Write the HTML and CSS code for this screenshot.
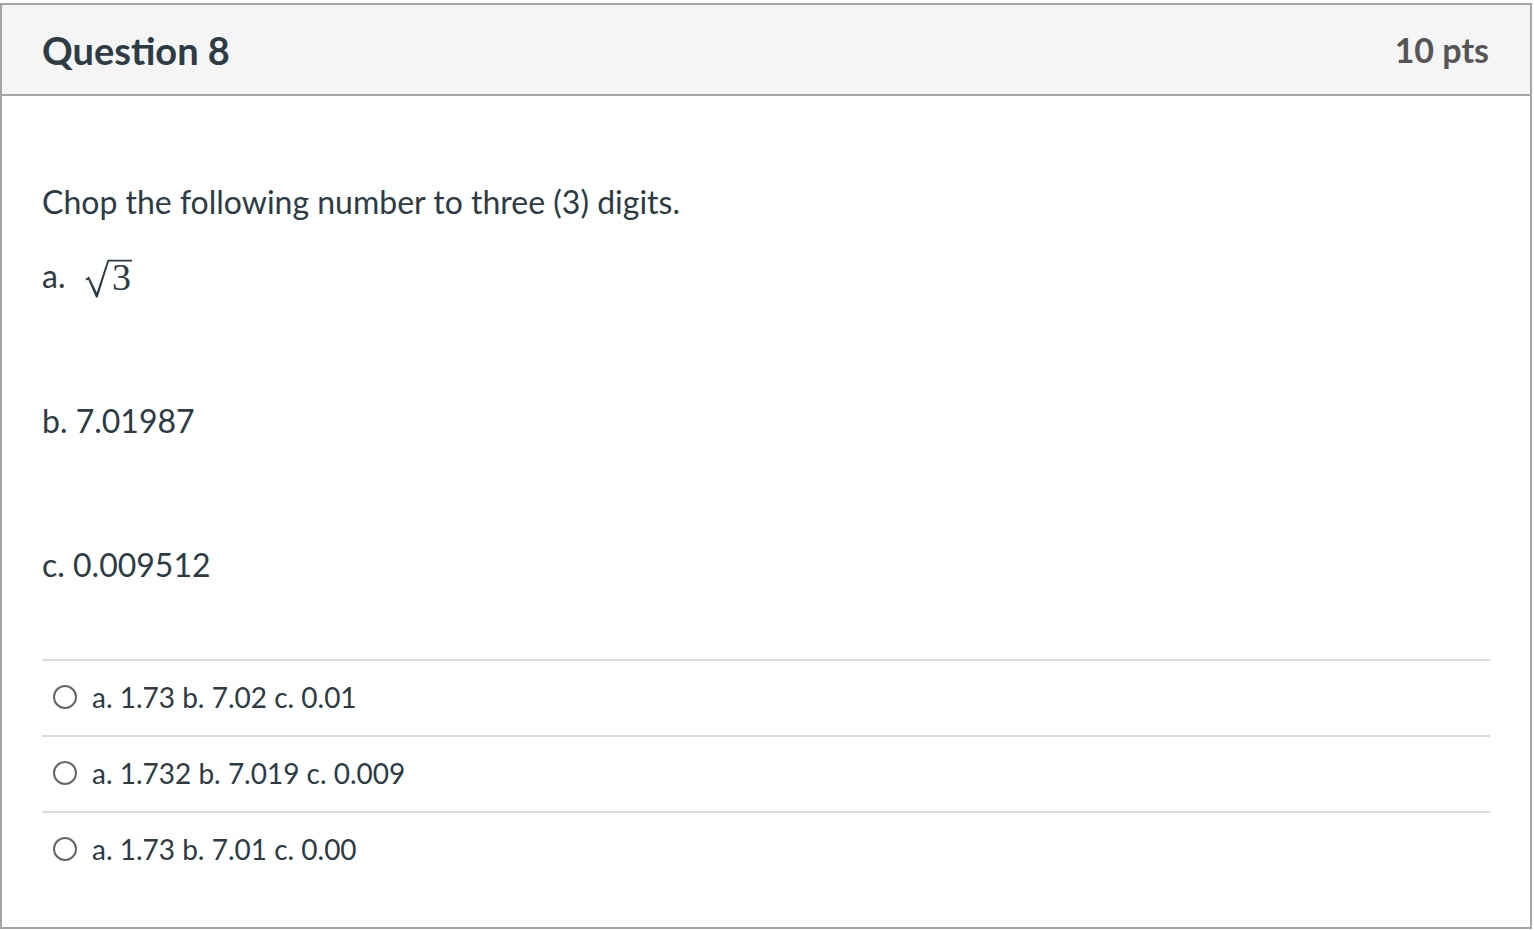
FILE: index.html
```html
<!DOCTYPE html>
<html>
<head>
<meta charset="utf-8">
<link rel="stylesheet" href="styles.css">
</head>
<body>
<div class="question">
  <div class="q-header">
    <h2 class="q-title">Question 8</h2>
    <div class="q-points">10 pts</div>
  </div>
  <div class="q-body">
    <p class="q-text first">Chop the following number to three (3) digits.</p>
    <p class="q-text item-a">a. <svg class="sqrt" width="48" height="42" viewBox="0 -2 48 42"><path d="M0.5 20 L4 17.5 L11.8 33.5 L22.6 0.8 L47 0.8 L47 2.6 L23.9 2.6 L12.6 38.5 L11 38.5 L3.2 20.6 L1.3 21.6 Z" fill="#2d3b45"/><text x="27" y="31" class="radicand">3</text></svg></p>
    <p class="q-text item">b. 7.01987</p>
    <p class="q-text item">c. 0.009512</p>
    <div class="answers">
      <label class="answer"><span class="radio"></span><span class="answer-text">a. 1.73 b. 7.02 c. 0.01</span></label>
      <label class="answer"><span class="radio"></span><span class="answer-text">a. 1.732 b. 7.019 c. 0.009</span></label>
      <label class="answer"><span class="radio"></span><span class="answer-text">a. 1.73 b. 7.01 c. 0.00</span></label>
    </div>
  </div>
</div>
</body>
</html>
```
FILE: styles.css
```css
html, body {
  margin: 0;
  padding: 0;
  background: #fff;
}
body {
  padding-top: 3px;
  font-family: Lato, "Noto Sans", sans-serif;
  color: #2d3b45;
}
.question {
  width: 1532px;
  height: 926px;
  box-sizing: border-box;
  border: 2px solid #a5a5a5;
  display: flex;
  flex-direction: column;
}
.q-header {
  height: 91px;
  box-sizing: border-box;
  background: #f5f5f5;
  border-bottom: 2px solid #a5a5a5;
  display: flex;
  align-items: center;
  justify-content: space-between;
  padding: 0 41px 0 40px;
}
.q-title {
  margin: 0;
  font-size: 38px;
  font-weight: 700;
  color: #2d3b45;
}
.q-points {
  font-size: 34px;
  font-weight: 700;
  color: #555;
}
.q-body {
  padding: 0 40px;
}
.q-text {
  margin: 0;
  font-size: 32px;
  line-height: 44px;
}
.q-text.first {
  margin-top: 84px;
}
.q-text.item-a {
  margin-top: 30px;
  margin-bottom: 100px;
}
.q-text.item {
  margin-bottom: 100px;
}
.q-text.item:last-of-type {
  margin-bottom: 72px;
}
.sqrt {
  vertical-align: -11px;
  margin-left: 11px;
  overflow: visible;
}
.radicand {
  font-family: "Liberation Serif", "DejaVu Serif", serif;
  font-size: 38px;
  fill: #2d3b45;
}
.answer {
  display: flex;
  align-items: center;
  height: 76px;
  box-sizing: border-box;
  border-top: 2px solid #dcdcdc;
  padding-left: 11px;
  padding-bottom: 2px;
  font-size: 28px;
}
.radio {
  width: 20px;
  height: 20px;
  border: 2px solid #666;
  border-radius: 50%;
  margin-right: 15px;
  flex: none;
}
```
